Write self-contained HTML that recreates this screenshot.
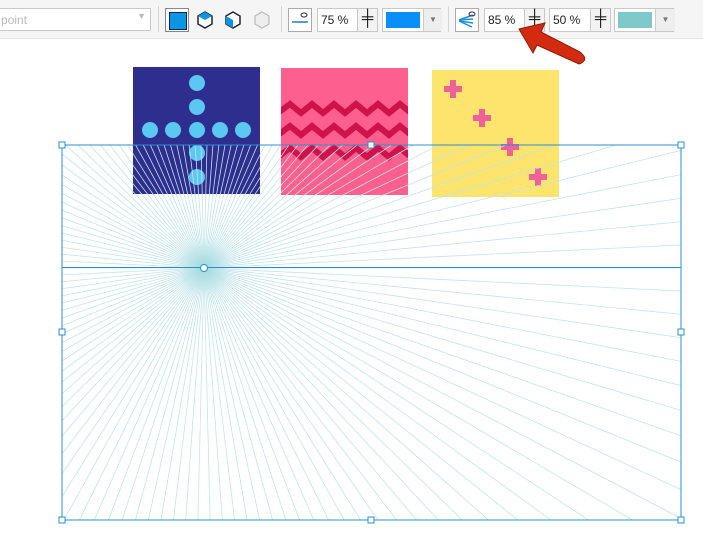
<!DOCTYPE html>
<html><head><meta charset="utf-8"><style>
html,body{margin:0;width:703px;height:542px;overflow:hidden}
body{background:#fff;font-family:"Liberation Sans",sans-serif;position:relative}
.tb{position:absolute;left:0;top:0;width:703px;height:38px;background:#f5f5f5;border-bottom:1px solid #e6e6e6}
.b{position:absolute;box-sizing:border-box;border:1px solid #c8c8c8;background:#fff;font-size:12px;color:#222}
.sp{position:absolute;width:1px;background:#d6d6d6;top:6px;height:26px}
svg{display:block}
</style></head><body>
<div class="tb">
 <div class="b" style="left:-2px;top:8px;width:153px;height:23px;color:#bbb;padding:4px 0 0 2px">point<span style="position:absolute;right:4px;top:2px;color:#bbb;font-size:9px">▼</span></div>
 <div class="sp" style="left:158px"></div>
 <div class="b" style="left:165px;top:8px;width:24px;height:24px;border-color:#888;background:#fff"><div style="position:absolute;left:3px;top:3px;width:16px;height:16px;background:#0a96e6;border:1px solid #025"></div></div>
 <svg style="position:absolute;left:197px;top:11px" width="90" height="18">
  <path d="M8 1 L15 5 L15 13 L8 17 L1 13 L1 5Z" fill="#fff" stroke="#223" stroke-width="1.5"/><path d="M8 1 L15 5 L8 9 L1 5Z" fill="#0a96e6"/>
  <g transform="translate(28,0)"><path d="M8 1 L15 5 L15 13 L8 17 L1 13 L1 5Z" fill="#fff" stroke="#223" stroke-width="1.5"/><path d="M1 5 L8 9 L8 17 L1 13Z" fill="#0a96e6"/></g>
  <g transform="translate(57,0)"><path d="M8 1 L15 5 L15 13 L8 17 L1 13 L1 5Z" fill="#eee" stroke="#bbb" stroke-width="1.2"/></g>
 </svg>
 <div class="sp" style="left:281px"></div>
 <div class="b" style="left:288px;top:8px;width:24px;height:24px;border-color:#aaa"><svg width="22" height="22"><line x1="3" y1="13" x2="19" y2="13" stroke="#1a7fd0" stroke-width="1.5"/><ellipse cx="15" cy="6" rx="3" ry="2" fill="none" stroke="#333"/></svg></div>
 <div class="b" style="left:317px;top:8px;width:41px;height:24px;padding:4px 0 0 3px">75 %</div>
 <div class="b" style="left:357px;top:8px;width:21px;height:24px;background:#f3f3f3;text-align:center;font-size:16px;line-height:20px">╪</div>
 <div class="b" style="left:382px;top:8px;width:59px;height:24px"><div style="position:absolute;left:3px;top:3px;width:34px;height:16px;background:#0a8ef8"></div><div style="position:absolute;left:40px;top:0;width:18px;height:22px;background:#eee;border-left:1px solid #ccc;font-size:8px;color:#777;text-align:center;line-height:22px">▼</div></div>
 <div class="sp" style="left:448px"></div>
 <div class="b" style="left:455px;top:8px;width:24px;height:24px;border-color:#aaa"><svg width="22" height="22"><path d="M3 11 L17 6 M3 11 L17 10 M3 12 L17 14 M3 12 L16 18" stroke="#1a8fe0" stroke-width="1.5"/><ellipse cx="16" cy="5" rx="3" ry="2" fill="none" stroke="#333"/></svg></div>
 <div class="b" style="left:484px;top:8px;width:41px;height:24px;padding:4px 0 0 3px">85 %</div>
 <div class="b" style="left:524px;top:8px;width:21px;height:24px;background:#f3f3f3;text-align:center;font-size:16px;line-height:20px">╪</div>
 <div class="b" style="left:549px;top:8px;width:42px;height:24px;padding:4px 0 0 3px">50 %</div>
 <div class="b" style="left:590px;top:8px;width:21px;height:24px;background:#f3f3f3;text-align:center;font-size:16px;line-height:20px">╪</div>
 <div class="b" style="left:614px;top:8px;width:60px;height:24px"><div style="position:absolute;left:3px;top:3px;width:34px;height:16px;background:#7ecaca"></div><div style="position:absolute;left:40px;top:0;width:19px;height:22px;background:#eee;border-left:1px solid #ccc;font-size:8px;color:#777;text-align:center;line-height:22px">▼</div></div>
</div>
<svg id="s" style="position:absolute;left:0;top:0" width="703" height="542">
 <defs><radialGradient id="g"><stop offset="0" stop-color="#8fd5dc" stop-opacity=".8"/><stop offset="1" stop-color="#d0eef0" stop-opacity="0"/></radialGradient>
 <clipPath id="c"><rect x="62" y="145" width="619" height="375"/></clipPath>
 <clipPath id="pc"><rect x="281" y="68" width="127" height="127"/></clipPath></defs>
 <rect x="133" y="67" width="127" height="127" fill="#2e2e8e"/>
 <g fill="#5ac8f2"><circle cx="197" cy="83" r="8"/><circle cx="197" cy="107" r="8"/><circle cx="197" cy="153" r="8"/><circle cx="197" cy="177" r="8"/>
 <circle cx="150" cy="130" r="8"/><circle cx="173" cy="130" r="8"/><circle cx="197" cy="130" r="8"/><circle cx="220" cy="130" r="8"/><circle cx="243" cy="130" r="8"/></g>
 <rect x="281" y="68" width="127" height="127" fill="#fd5f8e"/>
 <g fill="none" stroke="#d0124a" stroke-width="6" clip-path="url(#pc)"><path id="z" d="M278 113 l12 -9 l11 9 l11 -9 l11 9 l11 -9 l11 9 l11 -9 l11 9 l11 -9 l11 9 l11 -9 l11 9"/>
 <use href="#z" y="22"/><use href="#z" y="44"/></g>
 <rect x="432" y="70" width="127" height="127" fill="#fde46c"/>
 <g fill="#f0609a"><path id="p" d="M450 80h6v6h6v6h-6v6h-6v-6h-6v-6h6z"/><use href="#p" x="29" y="29"/><use href="#p" x="57" y="58"/><use href="#p" x="85" y="88"/></g>
 <g id="rays" clip-path="url(#c)" stroke="#c3e4e9" stroke-width="0.8"></g>
 <circle cx="204" cy="268" r="30" fill="url(#g)"/>
 <g stroke="#2a8fd0" fill="none" stroke-width="1">
  <rect x="62" y="145" width="619" height="375"/>
  <line x1="62" y1="267.5" x2="681" y2="267.5"/>
 </g>
 <g fill="#fff" stroke="#2a8fd0">
  <rect x="59" y="142" width="6" height="6"/><rect x="368" y="142" width="6" height="6"/><rect x="678" y="142" width="6" height="6"/>
  <rect x="59" y="329" width="6" height="6"/><rect x="678" y="329" width="6" height="6"/>
  <rect x="59" y="517" width="6" height="6"/><rect x="368" y="517" width="6" height="6"/><rect x="678" y="517" width="6" height="6"/>
  <circle cx="204" cy="268" r="3.5"/>
 </g>
 <path d="M519 29 L545 23 L541 32 L580 52 Q590 60 579 64 L537 45 L533 53Z" fill="#d42a10" stroke="#8a1a08" stroke-width="1"/>
</svg>
<script>
var g=document.getElementById('rays'),h='';
for(var i=0;i<130;i++){var a=i*Math.PI*2/130;h+='<line x1="204" y1="268" x2="'+(204+900*Math.cos(a)).toFixed(1)+'" y2="'+(268+900*Math.sin(a)).toFixed(1)+'"/>';}
g.innerHTML=h;
</script>
</body></html>
